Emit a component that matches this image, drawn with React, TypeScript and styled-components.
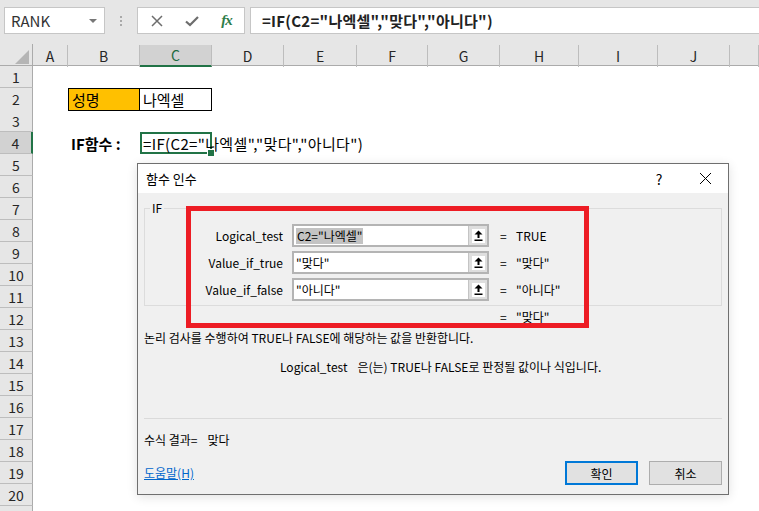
import React from "react";
import styled, { createGlobalStyle } from "styled-components";

const GlobalStyle = createGlobalStyle`
  html, body {
    margin: 0;
    padding: 0;
    background: #fff;
  }
  body {
    font-family: "Noto Sans CJK KR", "Noto Sans", sans-serif;
    overflow: hidden;
  }
  * {
    box-sizing: border-box;
  }
`;

const COLS = "33px 35px 72px 72px 72px 73px 71px 72px 79px 79px 72px 1fr";
const LETTERS = ["A", "B", "C", "D", "E", "F", "G", "H", "I", "J", ""];
const FORMULA = '=IF(C2="나엑셀","맞다","아니다")';

const Screen = styled.div`
  position: relative;
  width: 759px;
  height: 511px;
  overflow: hidden;
  background: #fff;
`;

const TopBar = styled.div`
  display: flex;
  align-items: flex-start;
  height: 44px;
  padding: 7px 0 0 4px;
  background: #e6e6e6;
`;

const NameBox = styled.div`
  display: flex;
  align-items: center;
  justify-content: space-between;
  width: 101px;
  height: 27px;
  padding: 0 7px 0 6px;
  background: #fff;
  border: 1px solid #c6c6c6;
  font-size: 15px;
  color: #333;
`;

const Caret = styled.span`
  width: 0;
  height: 0;
  border-left: 4px solid transparent;
  border-right: 4px solid transparent;
  border-top: 4px solid #777;
`;

const Grip = styled.div`
  display: flex;
  flex-direction: column;
  align-items: center;
  justify-content: center;
  gap: 2px;
  width: 32px;
  height: 27px;
  span {
    width: 2px;
    height: 2px;
    background: #a9a9a9;
  }
`;

const FxBox = styled.div`
  display: flex;
  align-items: center;
  width: 108px;
  height: 27px;
  padding-left: 1px;
  background: #fff;
  border: 1px solid #c6c6c6;
`;

const FxIcon = styled.span`
  display: flex;
  align-items: center;
  justify-content: center;
  width: 36px;
  height: 100%;
`;

const FxGlyph = styled.span`
  font-family: "Liberation Serif", serif;
  font-style: italic;
  font-weight: bold;
  font-size: 15px;
  color: #2f7d4a;
  letter-spacing: -1px;
`;

const FormulaInput = styled.div`
  flex: 1;
  display: flex;
  align-items: center;
  height: 27px;
  margin-left: 5px;
  padding-left: 11px;
  background: #fff;
  border: 1px solid #c6c6c6;
  border-right: none;
  font-size: 15px;
  font-weight: 700;
  letter-spacing: 0.25px;
  color: #222;
  white-space: nowrap;
`;

const GridRow = styled.div<{ $header?: boolean }>`
  display: grid;
  grid-template-columns: ${COLS};
  height: 22px;
  background: ${(p) => (p.$header ? "#e6e6e6" : "#fff")};
  border-bottom: ${(p) => (p.$header ? "1px solid #ababab" : "none")};
`;

const Corner = styled.div`
  display: flex;
  align-items: flex-end;
  justify-content: flex-end;
  padding: 0 3px 3px 0;
  border-right: 1px solid #ababab;
  &::after {
    content: "";
    width: 0;
    height: 0;
    border-left: 14px solid transparent;
    border-bottom: 14px solid #b5b5b5;
  }
`;

const ColHeader = styled.div<{ $active?: boolean }>`
  display: flex;
  align-items: center;
  justify-content: center;
  margin-top: 1px;
  font-size: 14px;
  color: ${(p) => (p.$active ? "#1e6b3f" : "#262626")};
  background: ${(p) => (p.$active ? "#d2d2d2" : "transparent")};
  border-right: 1px solid #bdbdbd;
  border-bottom: ${(p) => (p.$active ? "2px solid #217346" : "none")};
`;

const RowHeader = styled.div<{ $active?: boolean }>`
  display: flex;
  align-items: center;
  justify-content: center;
  font-size: 14px;
  color: #262626;
  background: ${(p) => (p.$active ? "#d2d2d2" : "#e6e6e6")};
  border-bottom: 1px solid #bdbdbd;
  border-right: ${(p) => (p.$active ? "2px solid #217346" : "1px solid #ababab")};
`;

const Cell = styled.div<{ $fill?: string; $boxed?: "all" | "noLeft"; $bold?: boolean; $selected?: boolean }>`
  position: relative;
  display: flex;
  align-items: center;
  padding-left: 3px;
  font-size: 15px;
  font-weight: ${(p) => (p.$bold ? 700 : 400)};
  letter-spacing: ${(p) => (p.$selected ? "0.35px" : "0")};
  color: #000;
  white-space: nowrap;
  overflow: visible;
  background: ${(p) => p.$fill || "transparent"};
  border: ${(p) => (p.$boxed ? "1px solid #000" : "none")};
  border-left: ${(p) => (p.$boxed === "noLeft" ? "none" : p.$boxed ? "1px solid #000" : "none")};
  box-shadow: ${(p) => (p.$selected ? "inset 0 0 0 2px #217346" : "none")};
  z-index: ${(p) => (p.$selected ? 1 : 0)};
  &::after {
    content: "";
    display: ${(p) => (p.$selected ? "block" : "none")};
    position: absolute;
    right: -3px;
    bottom: -3px;
    width: 6px;
    height: 6px;
    background: #217346;
    border: 1px solid #fff;
  }
`;

const Dialog = styled.div`
  position: absolute;
  left: 137px;
  top: 163px;
  width: 592px;
  height: 332px;
  display: flex;
  flex-direction: column;
  background: #f0f0f0;
  border: 1px solid #6f6f6f;
  box-shadow: 0 2px 10px rgba(0, 0, 0, 0.12);
  font-size: 12px;
  color: #000;
  z-index: 5;
`;

const TitleBar = styled.div`
  display: flex;
  align-items: center;
  height: 29px;
  padding-left: 8px;
  background: #fff;
  font-size: 13px;
`;

const TitleText = styled.span`
  flex: 1;
`;

const TitleButton = styled.span`
  display: flex;
  align-items: center;
  justify-content: center;
  width: 46px;
  height: 100%;
  font-size: 14px;
`;

const DialogBody = styled.div`
  display: flex;
  flex-direction: column;
  padding: 8px 6px 0 6px;
`;

const GroupBox = styled.fieldset`
  margin: 0;
  padding: 9px 0 4px 0;
  min-width: 0;
  border: 1px solid #dcdcdc;
`;

const GroupLegend = styled.legend`
  margin-left: 5px;
  padding: 0 2px;
  font-size: 12px;
  line-height: 14px;
`;

const ArgRow = styled.div`
  display: flex;
  align-items: center;
  height: 23px;
  margin-bottom: 4px;
  &:last-child {
    margin-bottom: 0;
  }
`;

const ArgLabel = styled.span`
  width: 138px;
  margin-right: 9px;
  text-align: right;
  line-height: 16px;
`;

const ArgInput = styled.div`
  display: flex;
  width: 197px;
  height: 23px;
  border: 2px solid #b4b4b4;
`;

const ArgField = styled.div`
  flex: 1;
  display: flex;
  align-items: center;
  padding-left: 2px;
  background: #fff;
  line-height: 16px;
  white-space: nowrap;
`;

const Picked = styled.span`
  padding: 0 1px;
  background: #c3c3c3;
`;

const ArgButton = styled.div`
  display: flex;
  align-items: center;
  justify-content: center;
  width: 19px;
  background: #dedede;
  border-left: 1px solid #c4c4c4;
`;

const ArrowTile = styled.span`
  display: flex;
  align-items: center;
  justify-content: center;
  width: 13px;
  height: 14px;
  background: #fff;
`;

const Eq = styled.span<{ $flush?: boolean }>`
  width: 16px;
  margin-left: ${(p) => (p.$flush ? 0 : 11)}px;
`;

const ResultLine = styled.div`
  display: flex;
  height: 16px;
  margin-top: 3px;
  padding-left: 356px;
  line-height: 16px;
`;

const TextLine = styled.div<{ $indent?: number; $top?: number }>`
  display: flex;
  height: 16px;
  margin-top: ${(p) => p.$top ?? 0}px;
  padding-left: ${(p) => p.$indent ?? 0}px;
  line-height: 16px;
  white-space: nowrap;
`;

const Gap = styled.span<{ $w: number }>`
  display: inline-block;
  width: ${(p) => p.$w}px;
`;

const Divider = styled.div`
  height: 1px;
  margin-top: 43px;
  background: #dadada;
`;

const Footer = styled.div`
  display: flex;
  align-items: center;
  gap: 11px;
  height: 24px;
  margin-top: 13px;
`;

const HelpLink = styled.a`
  flex: 1;
  color: #0066cc;
  text-decoration: underline;
  line-height: 16px;
`;

const DlgButton = styled.button<{ $primary?: boolean }>`
  width: 73px;
  height: 24px;
  padding: 0;
  font-family: inherit;
  font-size: 12px;
  color: #000;
  background: #e1e1e1;
  border: ${(p) => (p.$primary ? "2px solid #0078d7" : "1px solid #adadad")};
`;

const RedMark = styled.div`
  position: absolute;
  left: 186px;
  top: 206px;
  width: 403px;
  height: 122px;
  border: 5px solid #ed1c24;
  pointer-events: none;
  z-index: 6;
`;

const UpArrow: React.FC = () => (
  <svg width="9" height="11" viewBox="0 0 9 11">
    <path d="M4.5 0.5 L8.5 4.5 L5.5 4.5 L5.5 8 L3.5 8 L3.5 4.5 L0.5 4.5 Z" fill="#000" />
    <rect x="0.5" y="9.5" width="8" height="1.5" fill="#000" />
  </svg>
);

const cellFor = (row: number, col: number) => {
  if (row === 2 && col === 1) return <Cell key={col} $fill="#ffc000" $boxed="all">성명</Cell>;
  if (row === 2 && col === 2) return <Cell key={col} $boxed="noLeft">나엑셀</Cell>;
  if (row === 4 && col === 1) return <Cell key={col} $bold>IF함수 :</Cell>;
  if (row === 4 && col === 2) return <Cell key={col} $selected>{FORMULA}</Cell>;
  return <Cell key={col} />;
};

const args = [
  { label: "Logical_test", value: <Picked>C2="나엑셀"</Picked>, result: "TRUE" },
  { label: "Value_if_true", value: '"맞다"', result: '"맞다"' },
  { label: "Value_if_false", value: '"아니다"', result: '"아니다"' },
];

const App: React.FC = () => {
  // row 21 is only a sliver at the bottom edge, so its number is left out
  const rows = Array.from({ length: 21 }, (_, i) => i + 1);

  return (
    <Screen>
      <GlobalStyle />
      <TopBar>
        <NameBox>
          RANK
          <Caret />
        </NameBox>
        <Grip>
          <span />
          <span />
          <span />
        </Grip>
        <FxBox>
          <FxIcon>
            <svg width="12" height="12" viewBox="0 0 12 12">
              <path d="M1 1 L11 11 M11 1 L1 11" stroke="#6d6d6d" strokeWidth="1.5" />
            </svg>
          </FxIcon>
          <FxIcon>
            <svg width="14" height="12" viewBox="0 0 14 12">
              <path d="M1 6.5 L5 10 L13 2" stroke="#6d6d6d" strokeWidth="2.2" fill="none" />
            </svg>
          </FxIcon>
          <FxIcon>
            <FxGlyph>fx</FxGlyph>
          </FxIcon>
        </FxBox>
        <FormulaInput>{FORMULA}</FormulaInput>
      </TopBar>

      <GridRow $header>
        <Corner />
        {LETTERS.map((l, i) => (
          <ColHeader key={i} $active={l === "C"}>
            {l}
          </ColHeader>
        ))}
      </GridRow>

      {rows.map((r) => (
        <GridRow key={r}>
          <RowHeader $active={r === 4}>{r < 21 ? r : ""}</RowHeader>
          {LETTERS.map((_, c) => cellFor(r, c))}
        </GridRow>
      ))}

      <Dialog>
        <TitleBar>
          <TitleText>함수 인수</TitleText>
          <TitleButton>?</TitleButton>
          <TitleButton>
            <svg width="13" height="13" viewBox="0 0 13 13">
              <path d="M1 1 L12 12 M12 1 L1 12" stroke="#000" strokeWidth="1" />
            </svg>
          </TitleButton>
        </TitleBar>
        <DialogBody>
          <GroupBox>
            <GroupLegend>IF</GroupLegend>
            {args.map((a) => (
              <ArgRow key={a.label}>
                <ArgLabel>{a.label}</ArgLabel>
                <ArgInput>
                  <ArgField>{a.value}</ArgField>
                  <ArgButton>
                    <ArrowTile>
                      <UpArrow />
                    </ArrowTile>
                  </ArgButton>
                </ArgInput>
                <Eq>=</Eq>
                <span>{a.result}</span>
              </ArgRow>
            ))}
          </GroupBox>
          <ResultLine>
            <Eq $flush>=</Eq>
            <span>"맞다"</span>
          </ResultLine>
          <TextLine $top={5}>논리 검사를 수행하여 TRUE나 FALSE에 해당하는 값을 반환합니다.</TextLine>
          <TextLine $indent={136} $top={13}>
            Logical_test
            <Gap $w={10} />
            은(는) TRUE나 FALSE로 판정될 값이나 식입니다.
          </TextLine>
          <Divider />
          <TextLine $top={13}>
            수식 결과=
            <Gap $w={10} />
            맞다
          </TextLine>
          <Footer>
            <HelpLink>도움말(H)</HelpLink>
            <DlgButton $primary>확인</DlgButton>
            <DlgButton>취소</DlgButton>
          </Footer>
        </DialogBody>
      </Dialog>

      <RedMark />
    </Screen>
  );
};

export default App;
